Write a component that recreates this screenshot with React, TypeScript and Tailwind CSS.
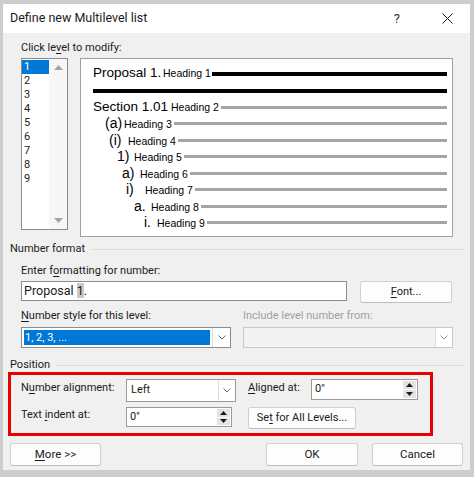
import { ReactNode } from "react";

// Preview rows for levels 3..9: number indent, number box width, number text, heading text
const LEVELS = [
  { indent: 12, box: 19, num: "(a)", label: "Heading 3" },
  { indent: 16, box: 19, num: "(i)", label: "Heading 4" },
  { indent: 24, box: 17, num: "1)", label: "Heading 5" },
  { indent: 29, box: 18, num: "a)", label: "Heading 6" },
  { indent: 33, box: 19, num: "i)", label: "Heading 7" },
  { indent: 41, box: 17, num: "a.", label: "Heading 8" },
  { indent: 51, box: 13, num: "i.", label: "Heading 9" },
];

function U({ children }: { children: ReactNode }) {
  return <span className="underline underline-offset-[2px]">{children}</span>;
}

function Chevron({ color = "#6b6b6b" }: { color?: string }) {
  return (
    <svg width="8" height="5" viewBox="0 0 8 5">
      <polyline points="0.5,0.5 4,4 7.5,0.5" fill="none" stroke={color} strokeWidth="1" />
    </svg>
  );
}

function Spinner() {
  return (
    <div className="flex flex-col gap-[1px] w-[14px] h-full py-[1px] pr-[1px]">
      <div className="flex-1 bg-[#e3e3e3] flex items-center justify-center">
        <svg width="7" height="4" viewBox="0 0 7 4">
          <polygon points="0,4 3.5,0 7,4" fill="#1a1a1a" />
        </svg>
      </div>
      <div className="flex-1 bg-[#e3e3e3] flex items-center justify-center">
        <svg width="7" height="4" viewBox="0 0 7 4">
          <polygon points="0,0 3.5,4 7,0" fill="#1a1a1a" />
        </svg>
      </div>
    </div>
  );
}

function Button({ children, className = "" }: { children: ReactNode; className?: string }) {
  return (
    <div
      className={
        "flex items-center justify-center bg-[#fdfdfd] border border-[#d0d0d0] border-b-[#bdbdbd] rounded-[3px] " +
        className
      }
    >
      <span>{children}</span>
    </div>
  );
}

function GroupHeader({ title }: { title: string }) {
  return (
    <div className="flex items-center h-[12px] ml-[7px] mr-[6px] gap-[6px]">
      <span className="leading-[12px]">{title}</span>
      <div className="flex-1 border-t border-[#dcdcdc]" />
    </div>
  );
}

function Preview() {
  return (
    <div className="w-[373px] h-[179px] bg-white border border-[#a0a0a0] pt-[3px] pl-[12px] pr-[5px] font-['Liberation_Sans',Arial,sans-serif] text-black">
      <div className="flex items-center h-[22px]">
        <div className="flex items-baseline">
          <span className="text-[13.5px] w-[70px] whitespace-nowrap">Proposal 1.</span>
          <span className="text-[10.5px] whitespace-nowrap">Heading 1</span>
        </div>
        <div className="flex-1 h-[4px] bg-black ml-[1px] mt-[2px]" />
      </div>
      <div className="h-[4px] bg-black mt-[5px]" />
      <div className="mt-[6px]">
        <div className="flex items-center h-[16.5px]">
          <div className="flex items-baseline">
            <span className="text-[13.5px] w-[78px] whitespace-nowrap">Section 1.01</span>
            <span className="text-[10.5px] whitespace-nowrap">Heading 2</span>
          </div>
          <div className="flex-1 h-[3px] bg-[#a6a6a6] ml-[2px]" />
        </div>
        {LEVELS.map((l) => (
          <div key={l.label} className="flex items-center h-[16.5px]">
            <div className="flex items-baseline" style={{ marginLeft: l.indent }}>
              <span className="text-[14px] whitespace-nowrap" style={{ width: l.box }}>
                {l.num}
              </span>
              <span className="text-[10.5px] whitespace-nowrap">{l.label}</span>
            </div>
            <div className="flex-1 h-[3px] bg-[#a6a6a6] ml-[2px]" />
          </div>
        ))}
      </div>
    </div>
  );
}

function LevelList() {
  return (
    <div className="w-[47px] h-[172px] bg-white border border-[#8c8c8c] flex">
      <div className="flex-1 pt-[1px]">
        {[1, 2, 3, 4, 5, 6, 7, 8, 9].map((n) => (
          <div
            key={n}
            className={"h-[14px] leading-[14px] pl-[2px] " + (n === 1 ? "bg-[#0078d7] text-white" : "")}
          >
            {n}
          </div>
        ))}
      </div>
      <div className="w-[18px] bg-[#f7f7f7] flex flex-col items-center justify-between py-[6px]">
        <svg width="9" height="5" viewBox="0 0 9 5">
          <polygon points="0,5 4.5,0 9,5" fill="#a3a3a3" />
        </svg>
        <svg width="9" height="5" viewBox="0 0 9 5">
          <polygon points="0,0 4.5,5 9,0" fill="#a3a3a3" />
        </svg>
      </div>
    </div>
  );
}

export default function App() {
  return (
    <div className="w-[474px] h-[477px] bg-[#cdcdcd] pt-[4px] pl-[3px] pr-[4px] pb-[7px] font-['Roboto',sans-serif] text-[11px] text-[#1b1b1b]">
      <div className="h-full flex flex-col bg-[#f0f0f0]">
        {/* title bar */}
        <div className="h-[29px] bg-white flex items-center pl-[7px]">
          <span className="text-[12.5px] flex-1">Define new Multilevel list</span>
          <span className="text-[13px] text-[#333] mr-[42px]">?</span>
          <svg width="11" height="11" viewBox="0 0 11 11" className="mr-[17px]">
            <path d="M0.5 0.5 L10.5 10.5 M10.5 0.5 L0.5 10.5" stroke="#222" strokeWidth="1" />
          </svg>
        </div>

        <div className="flex-1 flex flex-col">
          <div className="mt-[9px] ml-[18px] h-[12px] leading-[12px]">
            Click le<U>v</U>el to modify:
          </div>
          <div className="mt-[4px] ml-[18px] flex items-start gap-[12px]">
            <LevelList />
            <Preview />
          </div>

          <div className="mt-[6px]">
            <GroupHeader title="Number format" />
          </div>
          <div className="mt-[10px] ml-[18px] h-[12px] leading-[12px]">
            Enter f<U>o</U>rmatting for number:
          </div>
          <div className="mt-[4px] ml-[18px] h-[22px] flex items-start gap-[13px]">
            <div className="w-[326px] h-[20px] bg-white border border-[#8c8c8c] flex items-center pl-[2px] text-[12.5px] leading-[16px]">
              <span>
                Proposal <span className="bg-[#c9c9c9]">1</span>.
              </span>
            </div>
            <Button className="w-[92px] h-[22px]">
              <U>F</U>ont...
            </Button>
          </div>

          <div className="mt-[7px] ml-[18px] h-[12px] flex">
            <div className="w-[222px] leading-[12px]">
              <U>N</U>umber style for this level:
            </div>
            <div className="leading-[12px] text-[#a0a0a0]">Include level number from:</div>
          </div>
          <div className="mt-[5px] ml-[18px] h-[21px] flex gap-[12px]">
            <div className="w-[210px] h-full bg-white border border-[#8c8c8c] flex">
              <div className="flex-1 m-[2px] bg-[#0078d7] text-white flex items-center pl-[1px] leading-[12px]">
                1, 2, 3, ...
              </div>
              <div className="w-[18px] border-l border-[#dcdcdc] flex items-center justify-center">
                <Chevron />
              </div>
            </div>
            <div className="w-[210px] h-full bg-[#f3f3f3] border border-[#c8c8c8] flex">
              <div className="flex-1" />
              <div className="w-[17px] bg-white border-l border-[#dcdcdc] flex items-center justify-center">
                <Chevron color="#9a9a9a" />
              </div>
            </div>
          </div>

          <div className="mt-[11px]">
            <GroupHeader title="Position" />
          </div>
          <div className="mt-[1px] ml-[5px] w-[425px] h-[64px] border-[3px] border-[#e60000] pl-[10px] pt-[4px]">
            <div className="h-[23px] flex items-center">
              <div className="w-[105px] -mt-[4px]">
                N<U>u</U>mber alignment:
              </div>
              <div className="w-[110px] h-full bg-white border border-[#9a9a9a] flex">
                <div className="flex-1 flex items-center pl-[4px]">Left</div>
                <div className="w-[17px] border-l border-[#dcdcdc] flex items-center justify-center">
                  <Chevron />
                </div>
              </div>
              <div className="w-[63px] ml-[12px] -mt-[4px]">
                <U>A</U>ligned at:
              </div>
              <div className="w-[107px] h-[21px] self-start bg-white border border-[#9a9a9a] flex">
                <div className="flex-1 flex items-center pl-[3px]">0"</div>
                <Spinner />
              </div>
            </div>
            <div className="mt-[5px] h-[22px] flex items-center">
              <div className="w-[105px] -mt-[6px]">
                Text <U>i</U>ndent at:
              </div>
              <div className="w-[106px] h-[20px] self-start bg-white border border-[#9a9a9a] flex">
                <div className="flex-1 flex items-center pl-[3px]">0"</div>
                <Spinner />
              </div>
              <Button className="w-[108px] h-[22px] ml-[16px]">
                Se<U>t</U> for All Levels...
              </Button>
            </div>
          </div>

          <div className="mt-[7px] h-[23px] flex pl-[7px] pr-[7px]">
            <Button className="w-[91px] h-full text-[11.5px]">
              <U>M</U>ore &gt;&gt;
            </Button>
            <Button className="w-[92px] h-full ml-auto border-[#8ea4bd] border-b-[#7f97b2] text-[11.5px]">
              OK
            </Button>
            <Button className="w-[91px] h-full ml-[14px] text-[11.5px]">Cancel</Button>
          </div>
        </div>
      </div>
    </div>
  );
}
